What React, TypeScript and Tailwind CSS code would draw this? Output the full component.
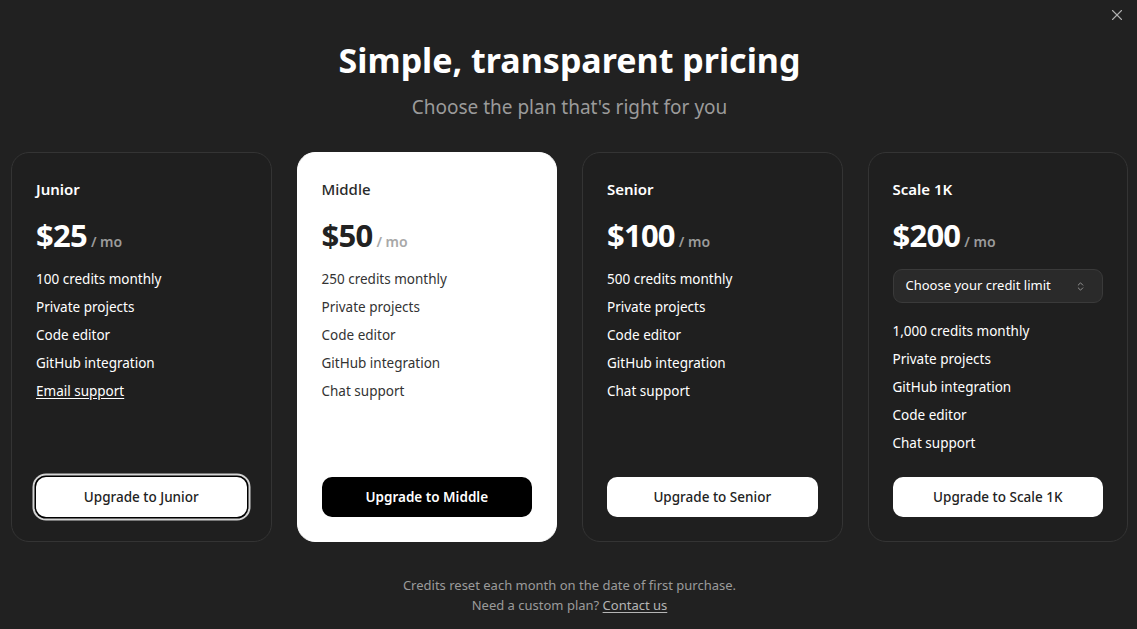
import { X, ChevronsUpDown } from "lucide-react";

type Plan = {
  name: string;
  price: string;
  features: string[];
  underlineLast?: boolean;
  highlight?: boolean;
  select?: boolean;
  ring?: boolean;
};

const plans: Plan[] = [
  {
    name: "Junior",
    price: "$25",
    features: ["100 credits monthly", "Private projects", "Code editor", "GitHub integration", "Email support"],
    underlineLast: true,
    ring: true,
  },
  {
    name: "Middle",
    price: "$50",
    features: ["250 credits monthly", "Private projects", "Code editor", "GitHub integration", "Chat support"],
    highlight: true,
  },
  {
    name: "Senior",
    price: "$100",
    features: ["500 credits monthly", "Private projects", "Code editor", "GitHub integration", "Chat support"],
  },
  {
    name: "Scale 1K",
    price: "$200",
    features: ["1,000 credits monthly", "Private projects", "GitHub integration", "Code editor", "Chat support"],
    select: true,
  },
];

const PlanCard = ({ plan }: { plan: Plan }) => {
  const light = plan.highlight;
  return (
    <div
      className={
        light
          ? "flex flex-col rounded-[18px] border border-white bg-white p-6 text-[#222]"
          : "flex flex-col rounded-[18px] border border-[#343434] bg-[#1f1f1f] p-6 text-white"
      }
    >
      <h3 className={light ? "text-[15px] leading-6 font-medium text-[#2a2a2a]" : "text-[15px] leading-6 font-semibold"}>
        {plan.name}
      </h3>
      <div className="mt-4 flex items-baseline gap-1 leading-9">
        <span className="text-[31px] font-bold tracking-tight">{plan.price}</span>
        <span className={light ? "text-sm font-semibold text-[#a8a8a8]" : "text-sm font-semibold text-[#9b9b9b]"}>/ mo</span>
      </div>

      {plan.select && (
        <button className="mt-4 flex h-[34px] w-full items-center justify-between rounded-[9px] border border-[#3a3a3a] bg-[#2a2a2a] pl-3 pr-4 text-[13px] text-white">
          <span>Choose your credit limit</span>
          <ChevronsUpDown size={11} className="text-[#9a9a9a]" />
        </button>
      )}

      <ul className={plan.select ? "mt-[14px] text-[13.5px]" : "mt-3 text-[13.5px]"}>
        {plan.features.map((f, i) => (
          <li
            key={f}
            className={
              (light ? "leading-7 text-[#333]" : "leading-7 text-white") +
              (plan.underlineLast && i === plan.features.length - 1 ? " underline underline-offset-2" : "")
            }
          >
            {f}
          </li>
        ))}
      </ul>

      <div className="mt-auto pt-5">
        <button
          className={
            light
              ? "h-10 w-full rounded-[10px] bg-black text-[13.5px] font-semibold text-white"
              : plan.ring
              ? "h-10 w-full rounded-[10px] bg-white text-[13.5px] font-medium text-[#222] ring-2 ring-[#d4d4d4] ring-offset-[1.5px] ring-offset-black"
              : "h-10 w-full rounded-[10px] bg-white text-[13.5px] font-medium text-[#222]"
          }
        >
          Upgrade to {plan.name}
        </button>
      </div>
    </div>
  );
};

export default function App() {
  return (
    <div
      className="relative min-h-[629px] w-full bg-[#212121] pt-10 pr-[9px] pl-[11px] text-white"
      style={{ fontFamily: '"Noto Sans", "Open Sans", sans-serif' }}
    >
      <button className="absolute top-[6px] right-[11px] text-[#b0b0b0]">
        <X size={18} strokeWidth={1.5} />
      </button>

      <div className="text-center">
        <h1 className="text-[34px] leading-10 font-bold">Simple, transparent pricing</h1>
        <p className="mt-[13px] text-[19px] leading-7 text-[#9b9b9b]">Choose the plan that's right for you</p>
      </div>

      <div className="mt-[31px] grid grid-cols-4 gap-[25px]">
        {plans.map((p) => (
          <PlanCard key={p.name} plan={p} />
        ))}
      </div>

      <div className="mt-[33px] text-center text-[13px] leading-5 text-[#9b9b9b]">
        <p>Credits reset each month on the date of first purchase.</p>
        <p>
          Need a custom plan? <a className="text-[#b5b5b5] underline underline-offset-2">Contact us</a>
        </p>
      </div>
    </div>
  );
}
